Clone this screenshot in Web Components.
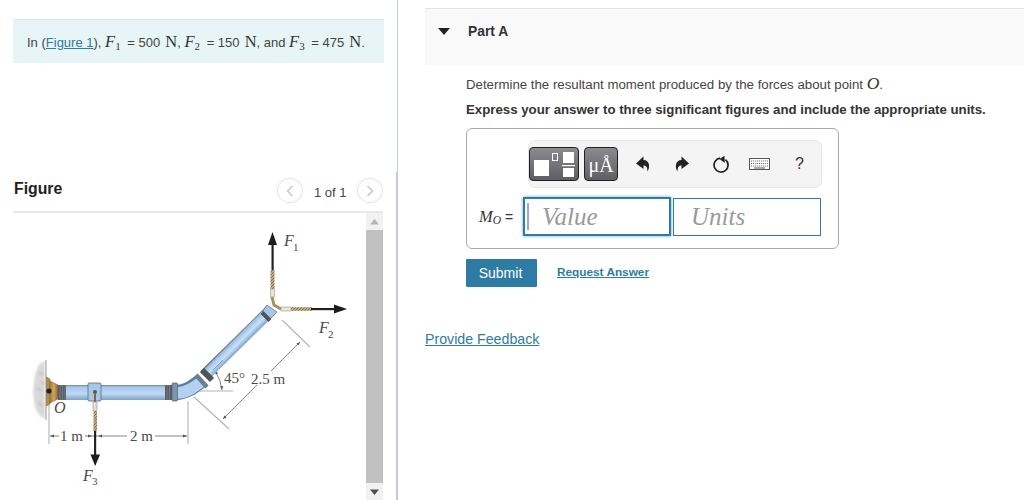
<!DOCTYPE html>
<html lang="en">
<head>
<meta charset="utf-8">
<title>Part A</title>
<style>
  html, body { margin: 0; height: 500px; overflow: hidden; background: #fff; }
  body { font-family: "Liberation Sans", Arial, sans-serif; color: #333; }
</style>
</head>
<body>
<mastering-page>
  <problem-pane slot="left"></problem-pane>
  <part-pane slot="right"></part-pane>
</mastering-page>

<script>
// small helper so each element only has to supply its css + markup
class Base extends HTMLElement {
    constructor() {
        super();
        this.attachShadow({ mode: 'open' });
        this.shadowRoot.innerHTML = `<style>${this.css()}</style>${this.html()}`;
    }
    css() { return ':host { display: block; }'; }
    html() { return '<slot></slot>'; }
}

const MATH = `
    .m { font-family: "Liberation Serif", "Times New Roman", serif; font-size: 16.5px; color: #333; }
    .m i { font-style: italic; }
    .m sub { font-size: 11px; line-height: 0; vertical-align: -3px; }
    .f { margin-right: 3px; }
    .n { margin-left: 1.5px; }
`;

class MasteringPage extends Base {
    css() {
        return `
            :host { display: flex; width: 1024px; height: 500px; overflow: hidden; }
            .left { width: 396px; flex: none; }
            .rule {
                width: 2px; flex: none;
                background: linear-gradient(#bccde0, #bccde0) right / 1px 100% no-repeat,
                            linear-gradient(transparent 172px, #bccde0 172px);
            }
            .right { flex: 1; min-width: 0; padding-left: 27px; }
        `;
    }
    html() {
        return `
            <div class="left"><slot name="left"></slot></div>
            <div class="rule"></div>
            <div class="right"><slot name="right"></slot></div>
        `;
    }
}

class ProblemPane extends Base {
    css() {
        return `
            :host { display: block; padding: 19px 13px 0 13px; box-sizing: border-box; height: 500px; }
            .intro {
                width: 371px; height: 44px; box-sizing: border-box;
                border-top: 1px solid #d9e4e4; background: #e8f5f6;
                padding: 0 0 0 14px; display: flex; align-items: center;
                font-size: 13px; color: #444; white-space: pre;
            }
            a { color: #2e7ba4; text-decoration: underline; }
            ${MATH}
            figure-viewer { margin-top: 112px; }
        `;
    }
    html() {
        return `
            <div class="intro"><span>In (<a href="#">Figure 1</a>), <span class="m f"><i>F</i><sub>1</sub></span> = 500 <span class="m n">N</span>, <span class="m f"><i>F</i><sub>2</sub></span> = 150 <span class="m n">N</span>, and <span class="m f"><i>F</i><sub>3</sub></span> = 475 <span class="m n">N</span>.</span></div>
            <figure-viewer></figure-viewer>
        `;
    }
}

class FigureViewer extends Base {
    css() {
        return `
            :host { display: block; width: 370px; }
            .head {
                display: flex; align-items: center; height: 38px; box-sizing: border-box;
                border-bottom: 2px solid #e8e8e8; padding: 0 0 5px 1px;
            }
            h2 { margin: 0 0 4px 0; flex: 1; font-size: 15.800px; font-weight: bold; color: #222; }
            .pg {
                width: 26px; height: 25px; border-radius: 50%; border: 1px solid #e2e2e2;
                box-sizing: border-box; display: flex; align-items: center; justify-content: center;
                background: #fff;
            }
            .count { font-size: 13px; color: #444; padding: 3px 11px 0 11px; width: 32px; text-align: center; white-space: nowrap; }
            .body { display: flex; height: 287px; }
            .canvas { width: 353px; flex: none; }
            .bar { width: 17px; flex: none; display: flex; flex-direction: column; background: #f1f1f1; }
            .arr { height: 17px; display: flex; align-items: center; justify-content: center; }
            .thumb { flex: 1; background: #c1c1c1; }
        `;
    }
    html() {
        return `
            <div class="head">
                <h2>Figure</h2>
                <span class="pg"><svg width="10" height="14" viewBox="0 0 10 14"><path d="M7.500 2 2.500 7l5 5" fill="none" stroke="#c4c4c4" stroke-width="1.400"/></svg></span>
                <span class="count">1 of 1</span>
                <span class="pg"><svg width="10" height="14" viewBox="0 0 10 14"><path d="M2.500 2l5 5-5 5" fill="none" stroke="#c4c4c4" stroke-width="1.400"/></svg></span>
            </div>
            <div class="body">
                <div class="canvas"><pipe-figure></pipe-figure></div>
                <div class="bar">
                    <div class="arr"><svg width="9" height="6"><path d="M0 5.500h9L4.500 0z" fill="#b5b5b5"/></svg></div>
                    <div class="thumb"></div>
                    <div class="arr"><svg width="9" height="6"><path d="M0 .5h9L4.500 6z" fill="#505050"/></svg></div>
                </div>
            </div>
        `;
    }
}

// the textbook drawing; viewBox uses page coordinates so it is easy to compare
class PipeFigure extends Base {
    css() {
        return `
            :host { display: block; width: 353px; height: 287px; }
            svg { display: block; }
            text { font-family: "Liberation Serif", "Times New Roman", serif; fill: #4a4a4a; }
            .lbl { font-style: italic; font-size: 16px; }
            .dim { font-size: 15px; }
            .sub { font-size: 11px; }
        `;
    }
    html() {
        return `
        <svg width="353" height="287" viewBox="13 213 353 287" xmlns="http://www.w3.org/2000/svg">
            <defs>
                <filter id="soft" x="-5%" y="-5%" width="110%" height="110%"><feGaussianBlur stdDeviation="0.4"/></filter>
                <filter id="wallblur" x="-40%" y="-10%" width="180%" height="120%"><feGaussianBlur stdDeviation="1.300"/></filter>
                <linearGradient id="pipeH" x1="0" y1="0" x2="0" y2="1">
                    <stop offset="0" stop-color="#6f86a0"/>
                    <stop offset=".14" stop-color="#a9c9ea"/>
                    <stop offset=".6" stop-color="#bcd8f5"/>
                    <stop offset="1" stop-color="#7f9fc4"/>
                </linearGradient>
                <linearGradient id="pipeD" gradientUnits="userSpaceOnUse" x1="235" y1="337" x2="243" y2="345">
                    <stop offset="0" stop-color="#4c5a6a"/>
                    <stop offset=".14" stop-color="#9dbee2"/>
                    <stop offset=".6" stop-color="#c8e1fa"/>
                    <stop offset="1" stop-color="#8aaad0"/>
                </linearGradient>
                <linearGradient id="brass" x1="0" y1="0" x2="1" y2="0">
                    <stop offset="0" stop-color="#a67f3e"/>
                    <stop offset=".5" stop-color="#d2a45c"/>
                    <stop offset="1" stop-color="#8a6730"/>
                </linearGradient>
                <pattern id="rope" width="3" height="3" patternUnits="userSpaceOnUse">
                    <rect width="3" height="3" fill="#bda988"/>
                    <path d="M0 3 3 0" stroke="#8a7550" stroke-width="1"/>
                </pattern>
            </defs>

            <!-- dimension lines -->
            <g stroke="#b4b4b4" stroke-width="1.100" fill="none">
                <path d="M49 405V444M188 401V444"/>
                <path d="M282 320 310 347M194 397 229 429"/>
                <path d="M198 391H233"/>
            </g>
            <g stroke="#777" stroke-width=".9" fill="none">
                <path d="M50 436H59M85 436H127M155 436H187"/>
                <path d="M300 342 271 371M257 385 223 419"/>
                <path d="M215 371Q221 380 222 390"/>
            </g>
            <g fill="#555">
                <path d="M50 436l4-1.600v3.200zM92 436l-4-1.600v3.200zM98 436l4-1.600v3.200zM187 436l-4-1.600v3.200z"/>
                <path d="M300 342l-1.400 3.600-2.200-2.200zM223 419l3.600-1.400-2.200-2.200zM222 390l-1.800-3.400 3-.6zM215 371l3.200 2-2.400 1.400z"/>
            </g>

            <g filter="url(#soft)">
                <!-- wall and base -->
                <path d="M45 361 39 364 35 375 33 392 35 408 40 416 45 419Z" fill="#d9d9d9" filter="url(#wallblur)"/>
                <path d="M39 372l4 3M37 388l5 3M38 402l5 4M41 382l3 2" stroke="#c4c4c4" stroke-width="2" filter="url(#wallblur)"/>
                <path d="M46 360V420" stroke="#9a9a9a" stroke-width="1"/>
                <path d="M46.500 377 50 379V404L46.500 406Z" fill="#b58c48" stroke="#7b5d2a" stroke-width=".5"/>
                <path d="M50 381 58 385V399L50 403Z" fill="url(#brass)" stroke="#7b5d2a" stroke-width=".5"/>
                <circle cx="49" cy="391" r="2.600" fill="#222"/>
                <rect x="58" y="385" width="8" height="15" fill="#5a5f66"/>
                <path d="M60 385v15M62.500 385v15M65 385v15" stroke="#7f858c" stroke-width=".7"/>

                <!-- horizontal run and bend -->
                <rect x="66" y="385" width="100" height="15" fill="url(#pipeH)"/>
                <rect x="165" y="385" width="8" height="15" fill="#5a5f66"/>
                <path d="M167 385v15M169.500 385v15" stroke="#7f858c" stroke-width=".7"/>
                <path d="M176 392.500C186 392.500 193 387 201 381" fill="none" stroke="#5f7c9c" stroke-width="15"/>
                <path d="M176 393C186 393 193 388 201 382" fill="none" stroke="#b3d2f1" stroke-width="11.500"/>
                <rect x="172" y="383" width="5.500" height="18" rx="1" fill="#7d95af" stroke="#4f6074" stroke-width=".7"/>

                <!-- collar with hanger -->
                <rect x="88" y="383" width="13" height="18" rx="1" fill="#a8c7e6" stroke="#56697f" stroke-width=".8"/>

                <!-- diagonal run -->
                <path d="M205 375 271 310" stroke="url(#pipeD)" stroke-width="12"/>
                <path d="M213 370 223 360" stroke="#6d8196" stroke-width=".7"/>
                <path d="M262 312 267 305 277 312 270 319Z" fill="#a6c6e6" stroke="#586a7e" stroke-width=".7"/>
                <path d="M262 312.500 270 320.500" stroke="#4f5256" stroke-width="4"/>
                <path d="M202 370 212 380" stroke="#505459" stroke-width="6"/>
                <path d="M196 375 207 387" stroke="#6a7f96" stroke-width="4.500"/>
            </g>

            <!-- F3 -->
            <g filter="url(#soft)">
                <circle cx="95" cy="392" r="2" fill="#555"/>
                <rect x="94" y="393" width="2" height="9" fill="#7a6a4a"/>
                <rect x="93" y="402" width="4" height="9" fill="#e0e0d8" stroke="#888" stroke-width=".5"/>
                <rect x="93.500" y="411" width="3.500" height="20" fill="url(#rope)"/>
                <rect x="94" y="431" width="2.200" height="27" fill="#222"/>
                <path d="M90.500 454.500H100L95.200 466Z" fill="#1c1c1c"/>
            </g>

            <!-- F1 -->
            <g filter="url(#soft)">
                <path d="M272.500 232 277 245H268Z" fill="#1c1c1c"/>
                <rect x="271.500" y="244" width="2.200" height="26" fill="#222"/>
                <rect x="270.500" y="270" width="4" height="19" fill="url(#rope)"/>
                <rect x="270.500" y="289" width="4" height="8" fill="#e6e6de" stroke="#888" stroke-width=".5"/>
            </g>

            <!-- F2 -->
            <g filter="url(#soft)">
                <path d="M272 297 274 305 281 309" fill="none" stroke="#a98f5a" stroke-width="3"/>
                <rect x="281" y="307" width="10" height="4" fill="#e6e6de" stroke="#888" stroke-width=".5"/>
                <rect x="291" y="307.200" width="21" height="3.600" fill="url(#rope)"/>
                <rect x="311" y="308" width="26" height="2.200" fill="#222"/>
                <path d="M334 304.500 347 309 334 313.500Z" fill="#1c1c1c"/>
            </g>

            <!-- labels -->
            <text class="lbl" x="284" y="246">F</text><text class="sub" x="293" y="251">1</text>
            <text class="lbl" x="319" y="333">F</text><text class="sub" x="328" y="338">2</text>
            <text class="lbl" x="83" y="481">F</text><text class="sub" x="92" y="485">3</text>
            <text class="lbl" x="54" y="413" style="font-size:16px">O</text>
            <text class="dim" x="60" y="441">1 m</text>
            <text class="dim" x="130" y="441">2 m</text>
            <text class="dim" x="224" y="383">45°</text>
            <text class="dim" x="251" y="384">2.5 m</text>
        </svg>`;
    }
}

class PartPane extends Base {
    css() {
        return `
            :host { display: block; padding-top: 8px; font-size: 13.250px; color: #444; }
            .bar {
                display: flex; height: 57px; box-sizing: border-box;
                border-top: 1px solid #e2e2e2; background: #f9f9f9; padding: 15px 0 0 13px;
            }
            .tri { width: 0; height: 0; margin-top: 4px; border: solid transparent; border-width: 7px 6px 0 6px; border-top-color: #222; }
            h3 { margin: 0 0 0 18px; font-size: 13.800px; line-height: 15px; font-weight: bold; color: #333; }
            .content { padding: 11px 0 0 41px; }
            p { margin: 0; white-space: nowrap; line-height: 18px; }
            p.b { font-weight: bold; margin-top: 7px; color: #333; }
            ${MATH}
            .m { font-size: 17.500px; line-height: 0; }
            answer-box { margin-top: 9px; }
            .actions { display: flex; align-items: center; margin-top: 10px; }
            button {
                font: 14px "Liberation Sans", Arial, sans-serif; color: #fff; background: #2e7ba4;
                border: 0; width: 71px; height: 28px; padding: 0 2px 0 0; border-radius: 1px;
            }
            .req { margin: 0 0 2px 20px; font-size: 11.800px; font-weight: bold; color: #2e7ba4; }
            .feedback { display: block; margin-top: 44px; font-size: 14.200px; line-height: 16px; color: #2e7ba4; }
        `;
    }
    html() {
        return `
            <div class="bar"><span class="tri"></span><h3>Part A</h3></div>
            <div class="content">
                <p>Determine the resultant moment produced by the forces about point <span class="m"><i>O</i></span>.</p>
                <p class="b">Express your answer to three significant figures and include the appropriate units.</p>
                <answer-box></answer-box>
                <div class="actions"><button type="button">Submit</button><a class="req" href="#">Request Answer</a></div>
            </div>
            <a class="feedback" href="#">Provide Feedback</a>
        `;
    }
}

class AnswerBox extends Base {
    css() {
        return `
            :host { display: block; width: 373px; height: 121px; box-sizing: border-box; border: 1px solid #aaa; border-radius: 6px; padding: 11px 0 0 12px; }
            math-toolbar { margin-left: 49px; }
            .row { display: flex; align-items: center; margin-top: 9px; }
            .lab { width: 44px; font-size: 14px; color: #333; white-space: pre; flex: none; }
            .lab span { font-family: "Liberation Serif", serif; font-style: italic; font-size: 16.500px; }
            .lab sub { font-size: 11.500px; line-height: 0; vertical-align: -2px; }
            .box {
                box-sizing: border-box; width: 148px; height: 38px; display: flex; align-items: center;
                font: italic 25px "Liberation Serif", "Times New Roman", serif; color: #9a9a9a;
                border: 1px solid #2e7ba4; background: #fff;
            }
            .value { border-width: 2px; box-shadow: 0 0 3px #5aa0c8; height: 39px; padding-left: 17px; position: relative; }
            .value::before { content: ""; position: absolute; left: 2px; top: 4px; bottom: 4px; width: 1.500px; background: #9aa6e6; }
            .units { margin-left: 2px; padding-left: 17px; }
        `;
    }
    html() {
        return `
            <math-toolbar></math-toolbar>
            <div class="row">
                <span class="lab"><span>M<sub>O</sub></span> = </span>
                <div class="box value">Value</div>
                <div class="box units">Units</div>
            </div>
        `;
    }
}

class MathToolbar extends Base {
    css() {
        return `
            :host {
                display: flex; align-items: center; width: 294px; height: 48px; box-sizing: border-box;
                background: #f4f4f4; border: 1px solid #e6e6e6; border-radius: 7px;
            }
            .tb {
                height: 34px; box-sizing: border-box; border: 1px solid #222; border-radius: 4px;
                background: linear-gradient(#8b8b8f, #5f5f63); display: flex; align-items: center; justify-content: center;
            }
            .t1 { width: 50px; }
            .t2 { width: 34px; margin-left: 5px; color: #fff; font: 20px "Liberation Serif", serif; white-space: pre; }
            .t2 span { position: relative; top: 1px; }
            .ic { display: flex; align-items: center; justify-content: center; width: 39px; height: 34px; }
            .ic.first { margin-left: 5px; }
            .q { color: #333; font-size: 16px; padding-left: 1px; }
        `;
    }
    html() {
        return `
            <div class="tb t1"><svg width="44" height="28" viewBox="0 0 44 28">
                <rect x="2" y="10" width="15" height="16" fill="#fff"/>
                <rect x="20.500" y="3.500" width="5" height="7" fill="none" stroke="#fff"/>
                <rect x="31" y="2" width="11" height="11" fill="#fff"/>
                <rect x="30" y="15" width="13" height="1.200" fill="#fff"/>
                <rect x="31" y="18" width="11" height="9" fill="#fff"/>
            </svg></div>
            <div class="tb t2"><span>μÅ</span></div>
            <div class="ic first"><svg width="16" height="16" viewBox="0 0 16 16"><path d="M8.500 .5 1 7.500 8.500 13V9.500C11 9.500 12.500 11 12.500 15.500 15.500 11 14.500 4 8.500 4Z" fill="#222"/></svg></div>
            <div class="ic"><svg width="16" height="16" viewBox="0 0 16 16"><path d="M7.500 .5 15 7.500 7.500 13V9.500C5 9.500 3.500 11 3.500 15.500 .5 11 1.500 4 7.500 4Z" fill="#222"/></svg></div>
            <div class="ic"><svg width="18" height="18" viewBox="0 0 18 18"><path d="M8 3.100A7 7 0 1 0 13.500 4.600" fill="none" stroke="#222" stroke-width="1.700"/><path d="M12.500 .7 12.800 8 7.500 4Z" fill="#222"/></svg></div>
            <div class="ic"><svg width="21" height="12" viewBox="0 0 21 12"><rect x=".5" y=".5" width="20" height="11" fill="#fff" stroke="#555"/><path d="M2 3h17M2 5.500h17M2 8h17" stroke="#777" stroke-dasharray="1.200 .8"/><path d="M5 10h11" stroke="#555"/></svg></div>
            <div class="ic q">?</div>
        `;
    }
}

customElements.define('mastering-page', MasteringPage);
customElements.define('problem-pane', ProblemPane);
customElements.define('figure-viewer', FigureViewer);
customElements.define('pipe-figure', PipeFigure);
customElements.define('part-pane', PartPane);
customElements.define('answer-box', AnswerBox);
customElements.define('math-toolbar', MathToolbar);
</script>
</body>
</html>
